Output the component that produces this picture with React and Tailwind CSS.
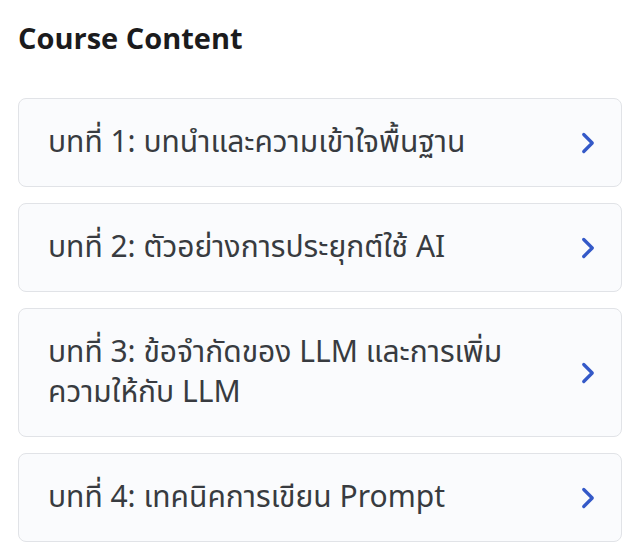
import { ChevronRight } from "lucide-react";

const lessons = [
  ["บทที่ 1: บทนำและความเข้าใจพื้นฐาน"],
  ["บทที่ 2: ตัวอย่างการประยุกต์ใช้ AI"],
  ["บทที่ 3: ข้อจำกัดของ LLM และการเพิ่ม", "ความให้กับ LLM"],
  ["บทที่ 4: เทคนิคการเขียน Prompt"],
];

// --- Lesson Row ---
const LessonCard = ({ lines }) => (
  <div className="flex items-center justify-between rounded-lg border border-[#e1e3e7] bg-[#fafbfd] pl-[29px] pr-[16px] py-[23.5px]">
    <p className="text-[30px] leading-[40px] text-[#383b40]">
      {lines.map((l, i) => (
        <span key={i} className="block whitespace-nowrap">
          {l}
        </span>
      ))}
    </p>
    <ChevronRight size={34} strokeWidth={2.3} className="shrink-0 text-[#3459c8]" />
  </div>
);

export default function App() {
  return (
    <div
      className="min-h-screen bg-white px-[18px] pt-[20px]"
      style={{ fontFamily: '"Noto Sans Thai", "Noto Sans", "DejaVu Sans", sans-serif' }}
    >
      <h1 className="text-[29px] font-bold leading-10 text-[#1b1b1d]">
        Course Content
      </h1>
      <div className="mt-[38px] flex flex-col gap-4">
        {lessons.map((lines, i) => (
          <LessonCard key={i} lines={lines} />
        ))}
      </div>
    </div>
  );
}
